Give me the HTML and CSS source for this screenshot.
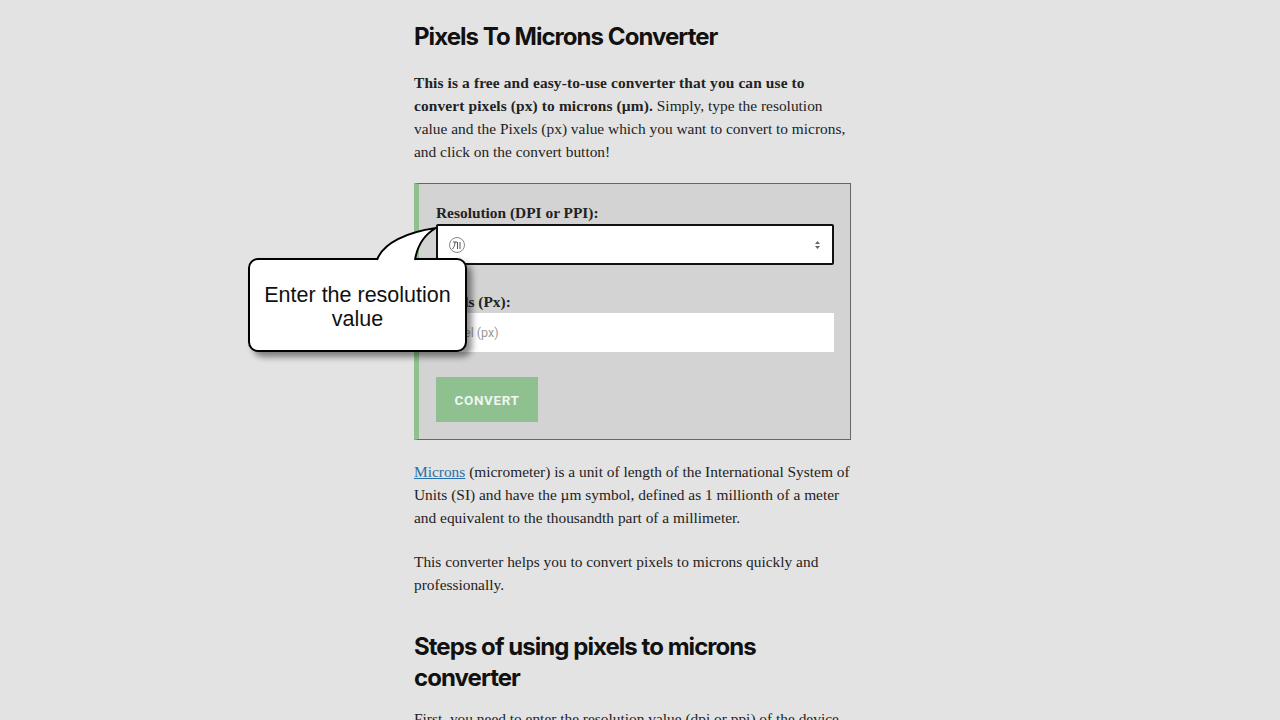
FILE: index.html
```html
<!DOCTYPE html>
<html lang="en">
<head>
    <meta charset="UTF-8">
    <meta name="viewport" content="width=device-width, initial-scale=1.0">
    <title>Pixels To Microns Converter</title>
    <link rel="stylesheet" href="styles.css">
</head>
<body>

    <div class="page">
        <h1>Pixels To Microns Converter</h1>

        <p class="intro">
            <strong>This is a free and easy-to-use converter that you can use to convert pixels (px) to microns (&micro;m).</strong>
            Simply, type the resolution value and the Pixels (px) value which you want to convert to microns, and click on the convert button!
        </p>

        <!-- Converter form -->
        <div class="converter">
            <label class="field-label" for="res">Resolution (DPI or PPI):</label>
            <div class="field focused">
                <span class="ime">
                    <svg width="18" height="18" viewBox="0 0 18 18">
                        <circle cx="9" cy="9" r="7.5" fill="none" stroke="#888" stroke-width="1"/>
                        <path d="M5 6h4M7 6c0 3-1 5-2.5 7M9.5 6v7M12 6v7" fill="none" stroke="#555" stroke-width="1"/>
                    </svg>
                </span>
                <span class="spin">
                    <svg width="7" height="12" viewBox="0 0 7 12">
                        <path d="M3.5 2L6 5H1z M3.5 10L1 7h5z" fill="#666"/>
                    </svg>
                </span>
            </div>

            <label class="field-label" for="px">Pixels (Px):</label>
            <div class="field">
                <span class="placeholder">Pixel (px)</span>
            </div>

            <button class="button">CONVERT</button>

            <!-- Tutorial callout -->
            <div class="callout">
                <svg class="callout-tail" width="70" height="34" viewBox="0 0 70 34">
                    <path d="M0 33 C6 16 30 5 59 1 C45 9 40 20 38 33" fill="#fff" stroke="#000" stroke-width="2"/>
                    <rect x="3" y="31" width="34" height="4" fill="#fff"/>
                </svg>
                <div class="callout-text">Enter the resolution value</div>
            </div>
        </div>

        <p><a href="#">Microns</a> (micrometer) is a unit of length of the International System of Units (SI) and have the &micro;m symbol, defined as 1 millionth of a meter and equivalent to the thousandth part of a millimeter.</p>

        <p>This converter helps you to convert pixels to microns quickly and professionally.</p>

        <h2>Steps of using pixels to microns converter</h2>

        <p>First, you need to enter the resolution value (dpi or ppi) of the device.</p>
    </div>

</body>
</html>
```

FILE: styles.css
```css
body, html {
    margin: 0;
    padding: 0;
    background: #e3e3e3;
    color: #222;
}

.page {
    width: 452px;
    margin: 0 auto;
    padding-top: 21px;
    font-family: "Liberation Serif", serif;
    font-size: 15.4px;
    line-height: 23px;
}

h1, h2 {
    font-family: Inter, "Liberation Sans", sans-serif;
    font-weight: 700;
    font-size: 24px;
    line-height: 31px;
    letter-spacing: -0.95px;
    color: #111;
    margin: 0;
}

h2 {
    margin-top: 35px;
    margin-bottom: 14px;
    max-width: 400px;
}

p {
    margin: 0 0 21px;
    max-width: 438px;
}

.intro {
    margin-top: 19px;
    margin-bottom: 20px;
}

.intro strong {
    letter-spacing: 0.13px;
}

a {
    color: #2a6fa8;
}

/* Converter box */
.converter {
    position: relative;
    display: flex;
    flex-direction: column;
    width: 398px;
    margin: 0 0 20px;
    padding: 17px 16px 17px 17px;
    background: #d3d3d3;
    border: 1px solid #666;
    border-left: 5px solid #8fc08f;
}

.field-label {
    font-weight: 700;
}

.field {
    display: flex;
    align-items: center;
    justify-content: space-between;
    height: 39px;
    padding: 0 12px 0 11px;
    background: #fff;
    margin-bottom: 25px;
}

.field.focused {
    height: 37px;
    border: 2px solid #111;
    border-radius: 2px;
    padding: 0 11px 0 10px;
    margin-bottom: 25px;
}

.ime {
    display: flex;
}

.spin {
    display: flex;
}

.placeholder {
    font-family: Roboto, "Liberation Sans", sans-serif;
    font-size: 12.5px;
    color: #999;
}

.button {
    align-self: flex-start;
    width: 102px;
    height: 45px;
    border: none;
    background: #8fc08f;
    color: #eef6ee;
    font-family: Roboto, "Liberation Sans", sans-serif;
    font-weight: 700;
    font-size: 13.5px;
    letter-spacing: 0.6px;
    cursor: pointer;
}

/* Speech bubble overlay */
.callout {
    position: absolute;
    left: -171px;
    top: 74px;
    width: 215px;
    height: 90px;
    background: #fff;
    border: 2px solid #000;
    border-radius: 10px;
    box-shadow: 5px 5px 6px rgba(0, 0, 0, 0.45);
    display: flex;
    align-items: center;
    justify-content: center;
}

.callout-tail {
    position: absolute;
    left: 127px;
    top: -33px;
    overflow: visible;
}

.callout-text {
    font-family: "Liberation Sans", Arial, sans-serif;
    font-size: 21.5px;
    line-height: 24px;
    text-align: center;
    color: #111;
    margin-top: 4px;
}
```
